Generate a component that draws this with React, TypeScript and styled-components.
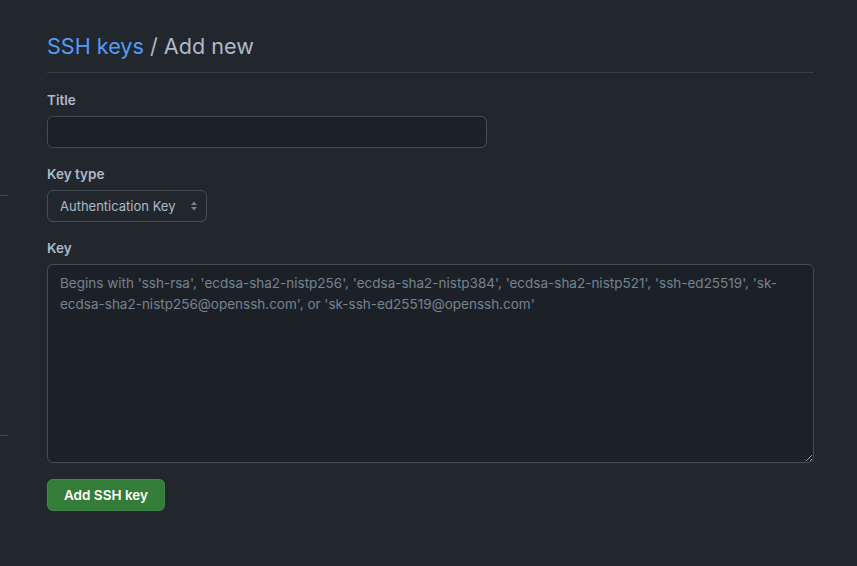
import styled, { createGlobalStyle } from 'styled-components';

const GlobalStyle = createGlobalStyle`
    body {
        margin : 0;
        background : #22272e;
        font-family : Inter, "Liberation Sans", Arial, sans-serif;
        color : #adbac7;
    }
`

const placeholder = "Begins with 'ssh-rsa', 'ecdsa-sha2-nistp256', 'ecdsa-sha2-nistp384', 'ecdsa-sha2-nistp521', 'ssh-ed25519', 'sk-ecdsa-sha2-nistp256@openssh.com', or 'sk-ssh-ed25519@openssh.com'"

const App = () => {
    return (
        <>
            <GlobalStyle />
            <Page>
                <SideBar>
                    <SideRule gap={165} />
                    <SideRule gap={239} />
                </SideBar>
                <Container>
                    <Subhead>
                        <Heading><Crumb href="#">SSH keys</Crumb> / Add new</Heading>
                    </Subhead>
                    <Form onSubmit={(e) => e.preventDefault()}>
                        <Group>
                            <Label htmlFor="title">Title</Label>
                            <Input id="title" type="text" />
                        </Group>
                        <Group>
                            <Label htmlFor="type">Key type</Label>
                            <SelectWrap>
                                <Select id="type" defaultValue="auth">
                                    <option value="auth">Authentication Key</option>
                                    <option value="sign">Signing Key</option>
                                </Select>
                                <Caret width="8" height="12" viewBox="0 0 8 12">
                                    <path d="M4 1.5 L7 5 H1 Z" fill="#768390" />
                                    <path d="M4 10.5 L7 7 H1 Z" fill="#768390" />
                                </Caret>
                            </SelectWrap>
                        </Group>
                        <Group>
                            <Label htmlFor="key">Key</Label>
                            <TextArea id="key" placeholder={placeholder} />
                        </Group>
                        <Button type="submit">Add SSH key</Button>
                    </Form>
                </Container>
            </Page>
        </>
    )
}

export default App;

const Page = styled.div`
    display : flex;
    gap : 39px;
    min-height : 566px;
    padding-top : 30px;
    box-sizing : border-box;
`

const SideBar = styled.div`
    width : 8px;
    flex-shrink : 0;
    display : flex;
    flex-direction : column;
`

const SideRule = styled.div<{gap:number}>`
    height : 1px;
    background : #444c56;
    margin-top : ${({gap})=>gap}px;
`

const Container = styled.div`
    width : 767px;
`

const Subhead = styled.div`
    padding-bottom : 9px;
    border-bottom : 1px solid #373e47;
    margin-bottom : 17px;
`

const Heading = styled.h2`
    margin : 0;
    font-size : 21.6px;
    font-weight : 400;
    line-height : 33px;
    color : #adbac7;
`

const Crumb = styled.a`
    color : #539bf5;
    text-decoration : none;
`

const Form = styled.form`
    display : flex;
    flex-direction : column;
    align-items : flex-start;
`

const Group = styled.div`
    display : flex;
    flex-direction : column;
    align-items : flex-start;
    width : 100%;
    margin-bottom : 16px;
`

const Label = styled.label`
    font-size : 13.5px;
    font-weight : 600;
    line-height : 21px;
    color : #adbac7;
    margin-bottom : 5px;
`

const fieldBase = `
    box-sizing : border-box;
    background : #1c2128;
    border : 1px solid #444c56;
    border-radius : 6px;
    color : #adbac7;
    font-family : Inter, "Liberation Sans", Arial, sans-serif;
    font-size : 14px;
    outline : none;
`

const Input = styled.input`
    ${fieldBase}
    width : 440px;
    height : 32px;
    padding : 5px 12px;
`

const SelectWrap = styled.div`
    position : relative;
    display : inline-flex;
`

const Select = styled.select`
    ${fieldBase}
    appearance : none;
    background : #22272e;
    width : 160px;
    height : 32px;
    padding : 0 18px 0 12px;
    font-size : 13px;
    line-height : 20px;
`

const Caret = styled.svg`
    position : absolute;
    right : 9px;
    top : 10px;
    pointer-events : none;
`

const TextArea = styled.textarea`
    ${fieldBase}
    width : 100%;
    height : 199px;
    padding : 8px 12px;
    font-size : 13.5px;
    line-height : 21px;
    resize : vertical;
    &::placeholder {
        color : #768390;
    }
`

const Button = styled.button`
    box-sizing : border-box;
    height : 32px;
    padding : 0 16px;
    background : #347d39;
    border : 1px solid rgba(205, 217, 229, 0.1);
    border-radius : 6px;
    color : #ffffff;
    font-family : Inter, "Liberation Sans", Arial, sans-serif;
    font-size : 13.5px;
    font-weight : 600;
    cursor : pointer;
`
